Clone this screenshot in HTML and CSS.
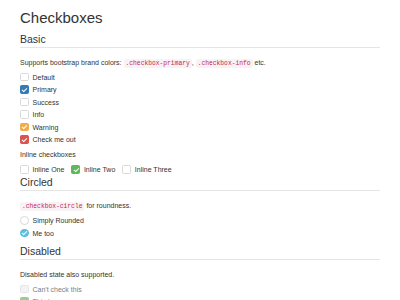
FILE: index.html
```html
<!DOCTYPE html>
<html>
	<head>
		<meta charset="UTF-8">
		<title>Checkboxes</title>
		<link rel="stylesheet" href="styles.css">
	</head>
	<body>
		<div class="container">
			<h2>Checkboxes</h2>

			<div class="group">
				<div class="legend">Basic</div>
				<p>Supports bootstrap brand colors: <code>.checkbox-primary</code>, <code>.checkbox-info</code> etc.</p>
				<div class="list">
					<label class="check"><span class="box"></span>Default</label>
					<label class="check primary on"><span class="box"></span>Primary</label>
					<label class="check success"><span class="box"></span>Success</label>
					<label class="check info"><span class="box"></span>Info</label>
					<label class="check warning on"><span class="box"></span>Warning</label>
					<label class="check danger on"><span class="box"></span>Check me out</label>
				</div>
				<p>Inline checkboxes</p>
				<div class="inline">
					<label class="check"><span class="box"></span>Inline One</label>
					<label class="check success on"><span class="box"></span>Inline Two</label>
					<label class="check"><span class="box"></span>Inline Three</label>
				</div>
			</div>

			<div class="group">
				<div class="legend">Circled</div>
				<p><code>.checkbox-circle</code> for roundness.</p>
				<div class="list">
					<label class="check circle"><span class="box"></span>Simply Rounded</label>
					<label class="check circle info on"><span class="box"></span>Me too</label>
				</div>
			</div>

			<div class="group">
				<div class="legend">Disabled</div>
				<p>Disabled state also supported.</p>
				<div class="list">
					<label class="check disabled"><span class="box"></span>Can't check this</label>
					<label class="check success on disabled"><span class="box"></span>This too</label>
					<label class="check warning on disabled"><span class="box"></span>And this</label>
				</div>
			</div>
		</div>
	</body>
</html>
```

FILE: styles.css
```css
html {
	overflow: hidden;
}
body {
	margin: 0;
	font: 7px/10px "Liberation Sans", Arial, sans-serif;
	color: #333;
}
.container {
	padding: 0 20px;
}
h2 {
	margin: 10px 0 5px;
	font-size: 15px;
	line-height: 16.5px;
	font-weight: normal;
}
.legend {
	font-size: 10.5px;
	line-height: 15px;
	border-bottom: 1px solid #e5e5e5;
	margin-bottom: 10px;
}
p {
	margin: 0 0 5px;
}
code {
	font: 6.3px/1 "Liberation Mono", monospace;
	color: #c7254e;
	background: #f9f2f4;
	padding: 1px 2px;
	border-radius: 2px;
}
.list {
	display: flex;
	flex-direction: column;
	gap: 2.5px;
	margin-bottom: 5px;
}
.inline {
	display: flex;
	gap: 7px;
}
.check {
	display: flex;
	align-items: flex-start;
	line-height: 10px;
	cursor: pointer;
}
.box {
	position: relative;
	width: 8.5px;
	height: 8.5px;
	box-sizing: border-box;
	margin-right: 4px;
	border: 1px solid #d9d9d9;
	border-radius: 1.5px;
	background: #fff;
}
.circle .box {
	border-radius: 50%;
}
.on .box::after {
	content: "";
	position: absolute;
	left: 2.3px;
	top: 0.5px;
	width: 2px;
	height: 3.8px;
	border: solid #fff;
	border-width: 0 1.3px 1.3px 0;
	transform: rotate(45deg);
}
.primary.on .box {
	background: #337ab7;
	border-color: #337ab7;
}
.success.on .box {
	background: #5cb85c;
	border-color: #5cb85c;
}
.info.on .box {
	background: #5bc0de;
	border-color: #5bc0de;
}
.warning.on .box {
	background: #f0ad4e;
	border-color: #f0ad4e;
}
.danger.on .box {
	background: #d9534f;
	border-color: #d9534f;
}
.disabled {
	opacity: .65;
	cursor: not-allowed;
}
.disabled .box {
	background: #eee;
}
```
